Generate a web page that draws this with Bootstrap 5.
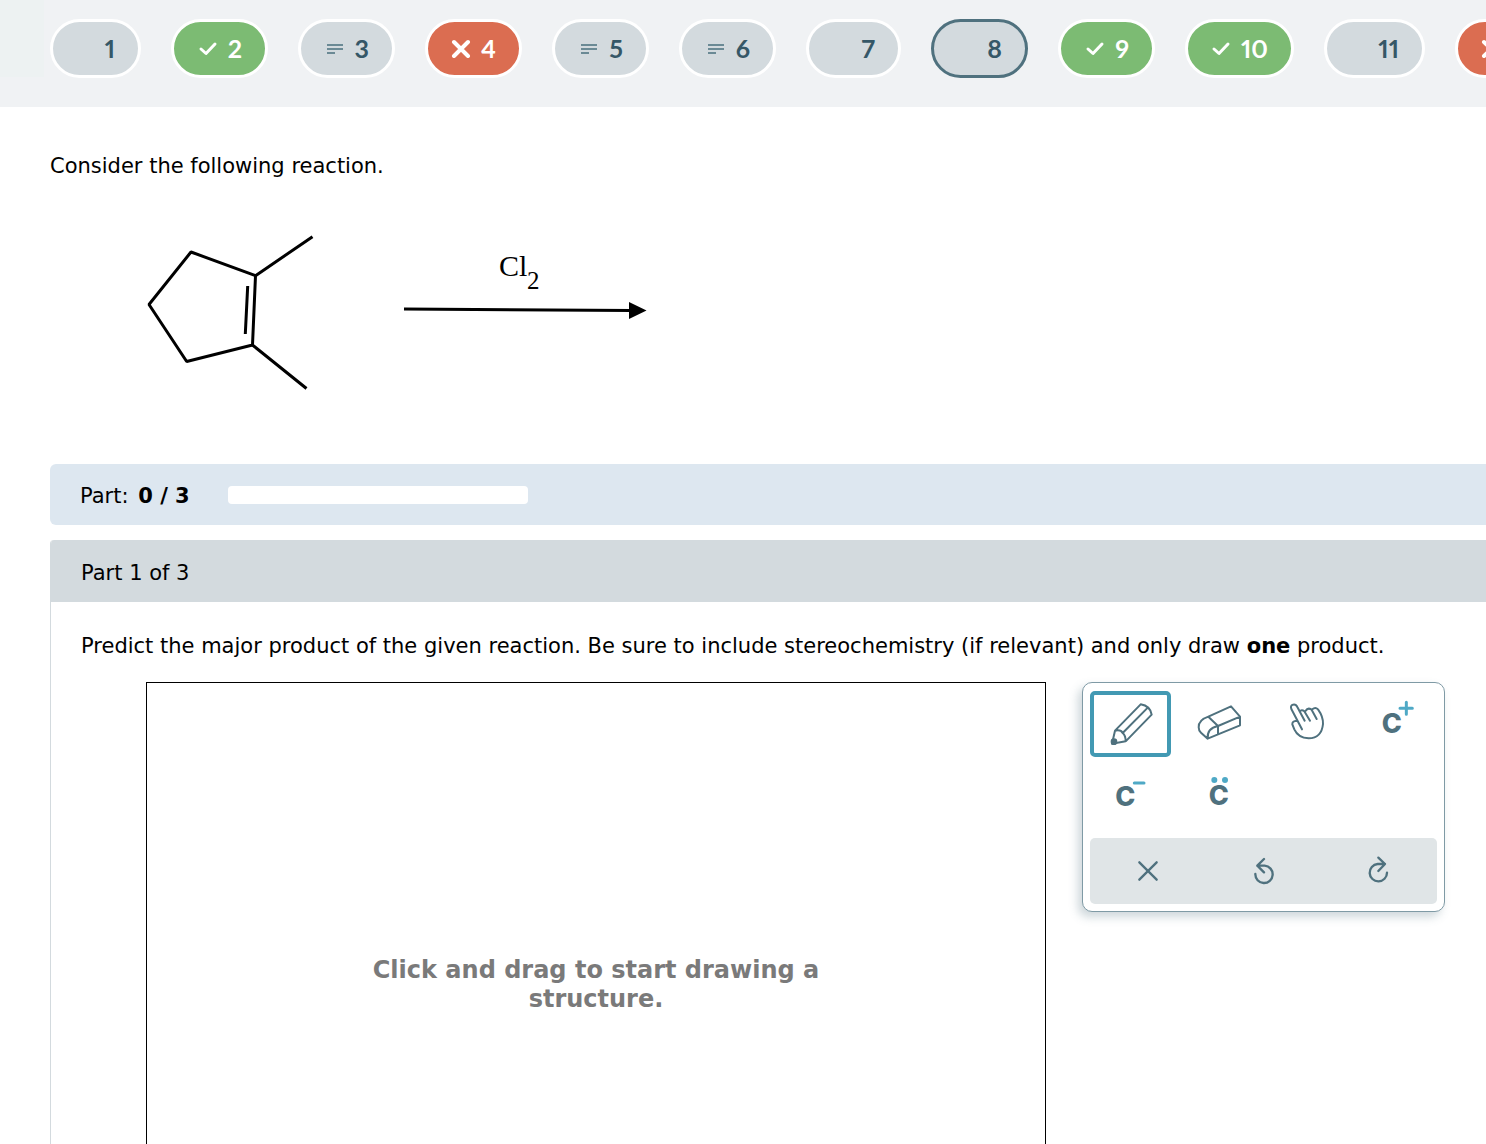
<!DOCTYPE html>
<html lang="en">
<head>
<meta charset="utf-8">
<meta name="viewport" content="width=device-width, initial-scale=1">
<title>Question 8</title>
<link href="https://cdn.jsdelivr.net/npm/bootstrap@5.3.0/dist/css/bootstrap.min.css" rel="stylesheet">
<style>
  body { font-family: "DejaVu Sans", sans-serif; font-size: 21px; line-height: 28px; color: #000; background: #fff; }
  .question-nav { height: 107px; padding: 19px 0 0 50px; gap: 30px; background: linear-gradient(#edf2f2, #edf2f2) 0 0 / 44px 77px no-repeat #f0f2f4; }
  .q-pill { height: 59px; min-width: 97px; padding: 0 23px 2px; gap: 10px; border: 3px solid #fff; border-radius: 30px; background: #d3dade; color: #355767; font: 700 25px/28px Lato, sans-serif; font-variant-numeric: proportional-nums; }
  .q-pill svg { width: 20px; height: 20px; fill: none; stroke: currentColor; }
  .q-pill .saved-icon { width: 16px; margin-right: 2px; stroke: #6b8a95; }
  .q-pill.is-right { background: #7cbb73; color: #fff; }
  .q-pill.is-wrong { background: #db6d51; color: #fff; }
  .q-pill.is-current { border-color: #4f717e; }
  .q-pill.is-narrow { min-width: 91px; }
  .q-pill.is-slim { min-width: 95px; }
  .q-pill.is-wide { min-width: 101px; }
  .q-pill.is-widest { min-width: 108px; }
  .question-main { padding: 45px 0 0 50px; }
  .scheme { width: 640px; height: 220px; margin: 20px 0 44px; }
  .part-progress { height: 61px; padding: 0 30px; gap: 30px; background: #dde7f0; border-radius: 6px 0 0 6px; }
  .part-count { min-width: 118px; padding-top: 2px; }
  .part-count b { margin-left: 3px; }
  .part-progress .progress { width: 300px; height: 18px; border-radius: 4px; background: #fff; }
  .part-panel { margin-top: 15px; border-left: 1px solid #d3dade; border-top-left-radius: 4px; }
  .part-title { height: 62px; padding: 4px 30px 0; background: #d3dade; font-size: 21px; line-height: 28px; }
  .part-body { padding: 30px 30px 0; }
  .editor { margin: 22px 0 0 65px; gap: 36px; }
  .sketch-area { width: 900px; height: 606px; border: 1px solid #000; }
  .sketch-hint { width: 480px; font-size: 24px; line-height: 29px; font-weight: 700; color: #7a7a7a; }
  .tool-panel { width: 363px; padding: 8px 7px 7px; border: 1px solid #7f9aa5; border-radius: 10px; background: #fff; box-shadow: -4px 5px 10px rgba(79, 113, 126, .28); }
  .tool-grid { display: grid; grid-template-columns: repeat(4, 1fr); gap: 8px; }
  .tool-btn { height: 66px; border: 4px solid transparent; border-radius: 5px; background: none; }
  .tool-btn.is-active { border-color: #4299b3; }
  .tool-btn svg { width: 50px; height: 50px; fill: none; stroke: #4f717e; stroke-width: 6; stroke-linejoin: round; stroke-linecap: round; }
  .tool-btn text { fill: #4f717e; stroke: none; font: 800 81px Inter, sans-serif; }
  .tool-btn .charge { stroke: #4fa9c6; stroke-width: 9; }
  .tool-actions { height: 66px; margin-top: 7px; border-radius: 5px; background: #e0e5e7; }
  .tool-actions svg { width: 30px; height: 30px; fill: none; stroke: #4f717e; stroke-width: 7; stroke-linecap: round; stroke-linejoin: round; }
</style>
<script defer src="https://cdn.jsdelivr.net/npm/bootstrap@5.3.0/dist/js/bootstrap.bundle.min.js"></script>
</head>
<body class="vh-100 overflow-hidden">

<svg class="d-none" aria-hidden="true">
  <symbol id="i-check" viewBox="0 0 20 20"><path d="M3 11l5 4.500 9-9.500" stroke-width="3" stroke-linecap="round" stroke-linejoin="round"/></symbol>
  <symbol id="i-cross" viewBox="0 0 20 20"><path d="M3 4l14 14M17 4L3 18" stroke-width="4" stroke-linecap="round"/></symbol>
  <symbol id="i-saved" viewBox="0 0 16 20"><path d="M0 7h16M0 11h16M0 15h8" stroke-width="2"/></symbol>
</svg>

<nav class="question-nav d-flex align-items-start overflow-hidden" aria-label="Questions">
  <button class="q-pill is-narrow d-flex flex-shrink-0 align-items-center justify-content-end">1</button>
  <button class="q-pill is-right d-flex flex-shrink-0 align-items-center justify-content-end"><svg><use href="#i-check"/></svg>2</button>
  <button class="q-pill d-flex flex-shrink-0 align-items-center justify-content-end"><svg class="saved-icon"><use href="#i-saved"/></svg>3</button>
  <button class="q-pill is-wrong d-flex flex-shrink-0 align-items-center justify-content-end"><svg><use href="#i-cross"/></svg>4</button>
  <button class="q-pill d-flex flex-shrink-0 align-items-center justify-content-end"><svg class="saved-icon"><use href="#i-saved"/></svg>5</button>
  <button class="q-pill d-flex flex-shrink-0 align-items-center justify-content-end"><svg class="saved-icon"><use href="#i-saved"/></svg>6</button>
  <button class="q-pill is-slim d-flex flex-shrink-0 align-items-center justify-content-end">7</button>
  <button class="q-pill is-current d-flex flex-shrink-0 align-items-center justify-content-end" aria-current="true">8</button>
  <button class="q-pill is-right d-flex flex-shrink-0 align-items-center justify-content-end"><svg><use href="#i-check"/></svg>9</button>
  <button class="q-pill is-right is-widest d-flex flex-shrink-0 align-items-center justify-content-end"><svg><use href="#i-check"/></svg>10</button>
  <button class="q-pill is-wide d-flex flex-shrink-0 align-items-center justify-content-end">11</button>
  <button class="q-pill is-wrong is-widest d-flex flex-shrink-0 align-items-center justify-content-start" aria-label="Question 12"><svg><use href="#i-cross"/></svg></button>
</nav>

<main class="question-main">
  <p class="m-0">Consider the following reaction.</p>

  <svg class="scheme d-block" viewBox="50 200 640 220" role="img" aria-label="1,2-dimethylcyclopentene with chlorine">
    <g fill="none" stroke="#000" stroke-width="3" stroke-linejoin="bevel">
      <path d="M191 252L255.500 275.700L252.500 345L186.700 361.500L149 304.500Z"/>
      <path d="M255.500 275.700L312.500 236.700M252.500 345L306.500 388.500M247.700 286L245.300 334M404 309L632 310.500"/>
    </g>
    <path d="M629 302L646.500 310.500L629 319Z"/>
    <g font-family="Liberation Serif, serif"><text x="499" y="276" font-size="30">Cl</text><text x="527" y="289" font-size="25">2</text></g>
  </svg>

  <div class="part-progress d-flex align-items-center">
    <div class="part-count">Part: <b>0 / 3</b></div>
    <div class="progress" role="progressbar" aria-label="Parts completed" aria-valuenow="0" aria-valuemin="0" aria-valuemax="3"></div>
  </div>

  <section class="part-panel overflow-hidden">
    <h2 class="part-title d-flex align-items-center m-0 fw-normal">Part 1 of 3</h2>
    <div class="part-body">
      <p class="m-0 text-nowrap">Predict the major product of the given reaction. Be sure to include stereochemistry (if relevant) and only draw <b>one</b> product.</p>
      <div class="editor d-flex align-items-start">
        <div class="sketch-area d-flex flex-shrink-0 align-items-center justify-content-center">
          <p class="sketch-hint m-0 text-center">Click and drag to start drawing a structure.</p>
        </div>
        <div class="tool-panel flex-shrink-0">
          <div class="tool-grid">
            <button class="tool-btn is-active d-flex align-items-center justify-content-center p-0" aria-label="Draw">
              <svg viewBox="106 87 150 150"><path d="M136 182L213 103Q242 108 246 134L168 214L127 221L136 182Q154 178 159 189Q168 196 168 214M159 189L235 112"/><circle cx="133" cy="215" r="7" fill="#4f717e"/></svg>
            </button>
            <button class="tool-btn d-flex align-items-center justify-content-center p-0" aria-label="Erase">
              <svg viewBox="374 87 150 150"><path d="M417 140L485 109L512 140V166L415 206L395 188Q388 182 388 172Q387 150 417 140L446 168V192M446 168L512 140M446 168Q413 174 415 206"/></svg>
            </button>
            <button class="tool-btn d-flex align-items-center justify-content-center p-0" aria-label="Move">
              <svg viewBox="70 87 150 150"><path d="M127 178L95 117Q91 107 100 104Q109 102 113 111L135 152M120 125Q126 117 134 124L151 152M138 122Q144 112 155 118L171 147M158 118Q167 110 175 118Q191 140 190 162Q186 204 147 205Q115 203 104 178L98 163Q97 153 112 152"/></svg>
            </button>
            <button class="tool-btn d-flex align-items-center justify-content-center p-0" aria-label="Positive charge">
              <svg viewBox="338 87 150 150"><text x="367" y="190">C</text><path class="charge" d="M422 115H459M441 97V133"/></svg>
            </button>
            <button class="tool-btn d-flex align-items-center justify-content-center p-0" aria-label="Negative charge">
              <svg viewBox="106 309 150 150"><text x="137" y="409">C</text><path class="charge" d="M194 339H223"/></svg>
            </button>
            <button class="tool-btn d-flex align-items-center justify-content-center p-0" aria-label="Lone pair">
              <svg viewBox="374 309 150 150"><text x="418" y="405">C</text><g fill="#4fa9c6" stroke="none"><circle cx="435" cy="330" r="9"/><circle cx="467" cy="330" r="9"/></g></svg>
            </button>
          </div>
          <div class="tool-actions d-flex">
            <button class="btn flex-fill p-0 border-0" aria-label="Clear"><svg viewBox="188 108 90 90"><path d="M207 127L259 179M259 127L207 179"/></svg></button>
            <button class="btn flex-fill p-0 border-0" aria-label="Undo"><svg viewBox="535 108 90 90"><path d="M580 117L560 137L580 157M560 137H582A26 26 0 1 1 554 162"/></svg></button>
            <button class="btn flex-fill p-0 border-0" aria-label="Redo"><svg viewBox="883 108 90 90"><path d="M926 113L946 132L926 153M946 132H924A26 26 0 1 0 952 158"/></svg></button>
          </div>
        </div>
      </div>
    </div>
  </section>
</main>
</body>
</html>
